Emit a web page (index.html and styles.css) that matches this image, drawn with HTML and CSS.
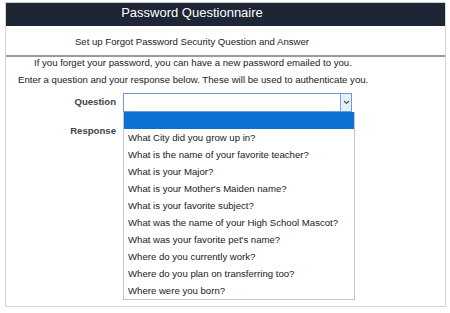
FILE: index.html
```html
<!DOCTYPE html>
<html>
<head>
<meta charset="utf-8">
<link rel="stylesheet" href="styles.css">
</head>
<body>
<div class="card">
  <div class="title">Password Questionnaire</div>
  <div class="subtitle">Set up Forgot Password Security Question and Answer</div>
  <p class="intro1">If you forget your password, you can have a new password emailed to you.</p>
  <p class="intro2">Enter a question and your response below. These will be used to authenticate you.</p>
  <div class="form">
    <div class="row">
      <div class="label">Question</div>
      <div class="selectwrap">
        <div class="select">
          <span class="arrow"><svg width="7" height="5" viewBox="0 0 7 5"><path d="M1 1 L3.5 3.5 L6 1" fill="none" stroke="#555" stroke-width="1.2"/></svg></span>
        </div>
        <ul class="options">
          <li class="sel">&nbsp;</li>
          <li>What City did you grow up in?</li>
          <li>What is the name of your favorite teacher?</li>
          <li>What is your Major?</li>
          <li>What is your Mother's Maiden name?</li>
          <li>What is your favorite subject?</li>
          <li>What was the name of your High School Mascot?</li>
          <li>What was your favorite pet's name?</li>
          <li>Where do you currently work?</li>
          <li>Where do you plan on transferring too?</li>
          <li>Where were you born?</li>
        </ul>
      </div>
    </div>
    <div class="row">
      <div class="label">Response</div>
    </div>
  </div>
</div>
</body>
</html>
```
FILE: styles.css
```css
html, body {
  margin: 0;
  padding: 0;
  background: #fff;
}
body {
  font-family: "Liberation Sans", Arial, sans-serif;
  color: #222;
  padding: 2px 4px 0 5px;
}
.card {
  width: 439px;
  height: 303px;
  border: 1px solid #d6d6d6;
  border-top: 1px solid #c8ccd2;
}
.title {
  background: #1e2534;
  color: #fff;
  text-align: center;
  font-size: 13px;
  height: 23px;
  line-height: 19px;
  padding-right: 67px;
}
.subtitle {
  text-align: center;
  font-size: 9.6px;
  height: 29px;
  line-height: 31px;
  border-bottom: 2px solid #9a9a9a;
  padding-right: 67px;
}
.intro1 {
  margin: 0;
  font-size: 9.6px;
  padding-left: 28px;
  height: 17px;
  line-height: 12px;
  color: #1a1a1a;
}
.intro2 {
  margin: 0;
  font-size: 9.6px;
  padding-left: 12px;
  height: 19px;
  line-height: 12px;
  color: #1a1a1a;
}
.form {
  display: flex;
  flex-direction: column;
  gap: 10px;
}
.row {
  display: flex;
  gap: 7px;
  align-items: flex-start;
}
.label {
  width: 110px;
  text-align: right;
  font-weight: bold;
  font-size: 9.6px;
  color: #444;
  line-height: 18px;
}
.selectwrap {
  position: relative;
}
.select {
  width: 227px;
  height: 17px;
  border: 1px solid #6a9ad8;
  position: relative;
  background: #fff;
}
.arrow {
  position: absolute;
  right: 0;
  top: 0;
  width: 10px;
  height: 17px;
  border-left: 1px solid #7aa6dc;
  background: #e6f0fb;
  display: flex;
  align-items: center;
  justify-content: center;
}
.options {
  position: absolute;
  left: 0;
  top: 19px;
  width: 230px;
  margin: 0;
  padding: 0;
  list-style: none;
  border: 1px solid #c4c4c4;
  border-top: none;
  background: #fff;
  z-index: 2;
}
.options li {
  font-size: 9.6px;
  height: 17px;
  line-height: 17px;
  padding-left: 4px;
  color: #1a1a1a;
  white-space: nowrap;
}
.options li.sel {
  background: #0a72d3;
}
```
